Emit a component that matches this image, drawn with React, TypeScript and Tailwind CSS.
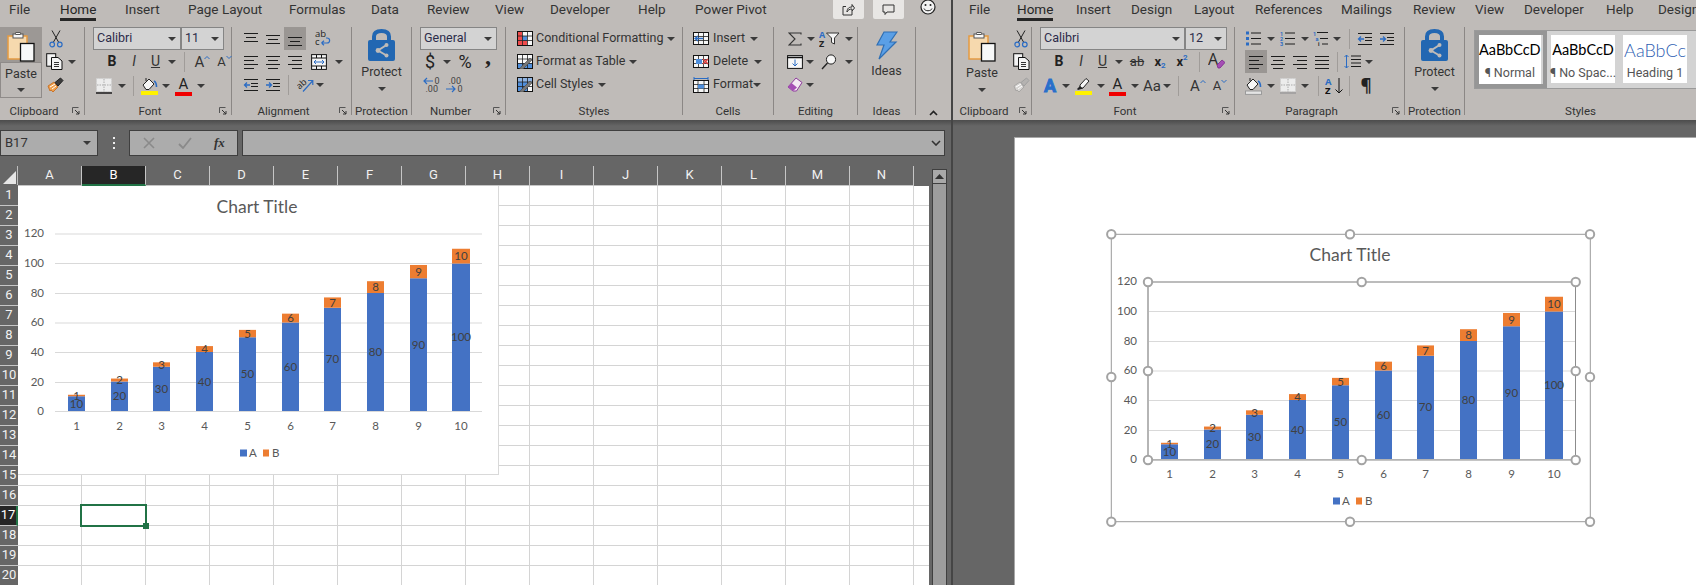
import type { ReactNode } from "react";

const INK = "#1c1c1c";
const BLUE = "#2b6cc4";

function Caret() {
  return (
    <svg width="8" height="4" viewBox="0 0 8 4" className="shrink-0">
      <polygon points="0,0 8,0 4,4" fill="#3a3a3a" />
    </svg>
  );
}

function Launcher() {
  return (
    <svg width="8" height="8" viewBox="0 0 8 8">
      <path d="M0.5 6V0.5H6.5" fill="none" stroke="#555" />
      <path d="M3 3L7 7M7 4V7H4" fill="none" stroke="#333" />
    </svg>
  );
}

function Lines({ rows, w = 16, h = 16 }: { rows: number[][]; w?: number; h?: number }) {
  return (
    <svg width={w} height={h} viewBox={`0 0 ${w} ${h}`}>
      {rows.map((r, i) => (
        <line key={i} x1={r[0]} x2={r[1]} y1={r[2] + 0.5} y2={r[2] + 0.5} stroke={INK} strokeWidth="1" />
      ))}
    </svg>
  );
}

function IndentIcon({ increase }: { increase?: boolean }) {
  return (
    <svg width="16" height="14" viewBox="0 0 16 14">
      <path d="M1 1.5H15M8 5.5H15M8 8.5H15M1 12.5H15" stroke={INK} fill="none" />
      {increase ? (
        <path d="M1 7H6M4 4.5L6.5 7L4 9.5" stroke={BLUE} fill="none" strokeWidth="1.3" />
      ) : (
        <path d="M7 7H1.5M4 4.5L1.5 7L4 9.5" stroke={BLUE} fill="none" strokeWidth="1.3" />
      )}
    </svg>
  );
}

function ClipboardIcon() {
  return (
    <svg width="28" height="30" viewBox="0 0 28 30">
      <rect x="1" y="4" width="19" height="23" fill="#f6d9ae" stroke="#e59a42" strokeWidth="1.5" />
      <rect x="6" y="2" width="10" height="4" fill="#f7f7f7" stroke="#555" />
      <rect x="9" y="0.5" width="4" height="2" fill="#f7f7f7" stroke="#555" />
      <rect x="13.5" y="11.5" width="13.5" height="17.5" fill="#f7f8f8" stroke="#111" strokeWidth="1.3" />
    </svg>
  );
}

function ScissorsIcon() {
  return (
    <svg width="14" height="18" viewBox="0 0 14 18">
      <path d="M3 0.5L9.5 12M11 0.5L4.5 12" stroke="#222" fill="none" />
      <circle cx="3.2" cy="14.5" r="2.3" stroke={BLUE} fill="none" strokeWidth="1.2" />
      <circle cx="10.8" cy="14.5" r="2.3" stroke={BLUE} fill="none" strokeWidth="1.2" />
    </svg>
  );
}

function CopyIcon() {
  return (
    <svg width="17" height="17" viewBox="0 0 17 17">
      <rect x="0.7" y="0.7" width="9" height="12.5" fill="#f4f4f4" stroke="#111" />
      <path d="M5.5 4.5H12L16 8V16.5H5.5Z" fill="#f4f4f4" stroke="#111" />
      <path d="M8 9.5H13M8 11.5H13M8 13.5H13" stroke="#333" />
    </svg>
  );
}

function BrushIcon({ muted }: { muted?: boolean }) {
  return (
    <svg width="17" height="16" viewBox="0 0 17 16">
      <path d="M1 9L7 5L11 10L6 15L4 13L3 14Z" fill={muted ? "#d6d4d2" : "#f0a04b"} stroke={muted ? "#a8a6a4" : "#c9752d"} />
      <path d="M3 10L8 7M5 12L9 9" stroke="#fff" />
      <path d="M8 5.5L13.5 1L16 3.5L11 9Z" fill={muted ? "#b5b3b1" : "#3b3b3b"} stroke={muted ? "#a0a0a0" : "#222"} />
    </svg>
  );
}

function BordersIcon({ muted }: { muted?: boolean }) {
  return (
    <svg width="16" height="16" viewBox="0 0 16 16">
      <rect x="0.5" y="0.5" width="15" height="13" fill="#ececec" stroke="#cfcfcf" strokeDasharray="1.5 1" />
      <path d="M8 1V14M1 7H15" stroke="#aaa" strokeDasharray="1.5 1" />
      <path d="M0 15H16" stroke={muted ? "#9a9a9a" : "#111"} strokeWidth="1.4" />
    </svg>
  );
}

function FillIcon({ bar = "#fff200", muted }: { bar?: string; muted?: boolean }) {
  return (
    <svg width="17" height="18" viewBox="0 0 17 18">
      <path d="M2 8L8 2L13 7L8 12.5H5Z" fill="#f6f6f6" stroke="#222" />
      <path d="M5 4V1" stroke="#222" />
      <path d="M13 4C15 5 15.5 8 15.5 10" stroke={BLUE} fill="none" strokeWidth="1.6" />
      {muted ? (
        <rect x="0.5" y="14" width="16" height="3.4" fill="#e4e4e4" stroke="#9a9a9a" />
      ) : (
        <rect x="0" y="14" width="17" height="4" fill={bar} />
      )}
    </svg>
  );
}

function HighlightIcon() {
  return (
    <svg width="17" height="18" viewBox="0 0 17 18">
      <path d="M5 8L11 1.5L14 4L8 11L5 11.5Z" fill="#f7f7f7" stroke="#222" />
      <path d="M5 9L8 11.5L3 13L2 12Z" fill="#222" />
      <rect x="0" y="14" width="17" height="4" fill="#fff200" />
    </svg>
  );
}

function FontColorIcon() {
  return (
    <div className="flex h-[20px] w-[17px] flex-col items-center">
      <span className="h-[15px] text-[15px] leading-[16px] text-[#222]">A</span>
      <span className="mt-[1px] h-[4px] w-[17px] bg-[#f00000]" />
    </div>
  );
}

function Grow({ down }: { down?: boolean }) {
  return (
    <div className="flex items-start">
      <span className={down ? "text-[13px] leading-[16px] text-[#333]" : "text-[15px] leading-[16px] text-[#333]"}>A</span>
      <svg width="6" height="5" viewBox="0 0 6 5" className="mt-[1px]">
        <path d={down ? "M0.5 1L3 3.5L5.5 1" : "M0.5 4L3 1.5L5.5 4"} stroke={BLUE} fill="none" />
      </svg>
    </div>
  );
}

function WrapIcon() {
  return (
    <svg width="16" height="17" viewBox="0 0 16 17">
      <text x="0" y="7" fontSize="9.5" fill="#222" fontFamily="Open Sans, sans-serif">ab</text>
      <text x="0" y="15" fontSize="9.5" fill="#222" fontFamily="Open Sans, sans-serif">c</text>
      <path d="M6.5 13H12C15.5 13 15.5 8 12 8H11M6.5 13L9 10.8M6.5 13L9 15.2" stroke={BLUE} fill="none" strokeWidth="1.2" />
    </svg>
  );
}

function MergeIcon() {
  return (
    <svg width="16" height="16" viewBox="0 0 16 16">
      <rect x="0.6" y="0.6" width="14.8" height="14.8" fill="#f5f5f5" stroke="#111" />
      <path d="M5.5 1V4M10.5 1V4M5.5 12V15M10.5 12V15M1 4H15M1 12H15" stroke="#111" />
      <path d="M3 8H13M5 6L3 8L5 10M11 6L13 8L11 10" stroke={BLUE} fill="none" />
    </svg>
  );
}

function OrientationIcon() {
  return (
    <svg width="17" height="16" viewBox="0 0 17 16">
      <text x="0" y="10" fontSize="9" fill="#222" fontFamily="Open Sans, sans-serif" transform="rotate(-42 5 8)">ab</text>
      <path d="M6 14.5L15.5 4M11 3.5H15.8V8" stroke={BLUE} fill="none" strokeWidth="1.2" />
    </svg>
  );
}

function ProtectIcon() {
  return (
    <svg width="27" height="32" viewBox="0 0 27 32">
      <path d="M6 13V7.5C6 3.5 9 2 13.5 2C18 2 21 3.5 21 7.5V13" fill="none" stroke="#2267b2" strokeWidth="4" />
      <rect x="0" y="11" width="27" height="21" rx="2" fill="#2267b2" />
      <path d="M18.5 16L10 21.5L18.5 26.5" fill="none" stroke="#bfbbb8" strokeWidth="2" />
      <circle cx="18.5" cy="16" r="2" fill="#bfbbb8" />
      <circle cx="10" cy="21.5" r="2.4" fill="#bfbbb8" />
      <circle cx="18.5" cy="26.5" r="2" fill="#bfbbb8" />
    </svg>
  );
}

function DecimalIcon({ more }: { more?: boolean }) {
  return (
    <div className="flex flex-col text-[9px] leading-[8px] text-[#444]">
      {more ? (
        <>
          <div className="flex items-center gap-[1px]">
            <svg width="10" height="8" viewBox="0 0 10 8">
              <path d="M10 4H1M4 1L1 4L4 7" stroke={BLUE} fill="none" strokeWidth="1.2" />
            </svg>
            <span>0</span>
          </div>
          <span className="pl-[2px]">.00</span>
        </>
      ) : (
        <>
          <span className="pl-[2px]">.00</span>
          <div className="flex items-center gap-[1px]">
            <svg width="10" height="8" viewBox="0 0 10 8">
              <path d="M0 4H9M6 1L9 4L6 7" stroke={BLUE} fill="none" strokeWidth="1.2" />
            </svg>
            <span>0</span>
          </div>
        </>
      )}
    </div>
  );
}

function TableIcon({ kind }: { kind: "cond" | "format" | "styles" }) {
  return (
    <svg width="16" height="15" viewBox="0 0 16 15">
      <rect x="0.5" y="0.5" width="15" height="14" fill="#f8f8f8" stroke="#111" />
      {kind === "cond" && (
        <>
          <rect x="1" y="1" width="4" height="13" fill="#ef4b4b" />
          <rect x="5" y="10" width="5" height="4" fill="#ef4b4b" />
          <rect x="5" y="5" width="5" height="5" fill="#4f8fdc" />
        </>
      )}
      {kind === "styles" && <rect x="1" y="1" width="14" height="4" fill="#8fb4e3" />}
      {kind === "styles" && <rect x="1" y="5" width="10" height="9" fill="#4f8fdc" />}
      {kind === "format" && <rect x="1" y="9" width="14" height="5" fill="#4f8fdc" />}
      <path d="M5.5 1V14M10.5 1V14M1 5H15M1 9.5H15" stroke="#222" strokeWidth="0.8" />
      {kind !== "cond" && <path d="M4 13L13 4L15 6L6 15L2.5 15Z" fill="#777" stroke="#444" strokeWidth="0.6" />}
    </svg>
  );
}

function CellsIcon({ kind }: { kind: "insert" | "delete" | "format" }) {
  return (
    <svg width="16" height="16" viewBox="0 0 16 16">
      {kind === "format" && <path d="M1 1.5H15M1 0V3M15 0V3" stroke={BLUE} />}
      <rect x="0.5" y={kind === "format" ? 3.5 : 1.5} width="15" height={kind === "format" ? 12 : 12} fill="#f6f6f6" stroke="#111" />
      <path d={kind === "format" ? "M5 4V15M11 4V15M1 7.5H15M1 11.5H15" : "M5.5 2V13M10.5 2V13M1 5.5H15M1 9.5H15"} stroke="#222" strokeWidth="0.8" />
      {kind === "format" && <rect x="5" y="7.5" width="6" height="4" fill="#4f8fdc" />}
      {kind === "insert" && <path d="M10 7.5H2M5 5L2 7.5L5 10" stroke={BLUE} fill="none" strokeWidth="1.3" />}
      {kind === "delete" && (
        <>
          <rect x="3" y="5" width="6" height="5" fill="#4f8fdc" />
          <path d="M10 5L15 10M15 5L10 10" stroke="#e04040" strokeWidth="1.5" />
        </>
      )}
    </svg>
  );
}

function SigmaIcon() {
  return (
    <svg width="14" height="14" viewBox="0 0 14 14">
      <path d="M13 2.5V1H1L7 7L1 13H13V11.5" fill="none" stroke="#333" strokeWidth="1.1" />
    </svg>
  );
}

function SortFilterIcon() {
  return (
    <svg width="22" height="17" viewBox="0 0 22 17">
      <text x="0" y="7.5" fontSize="9" fontWeight="700" fill={BLUE} fontFamily="Open Sans, sans-serif">A</text>
      <text x="0" y="16.5" fontSize="9" fontWeight="700" fill="#222" fontFamily="Open Sans, sans-serif">Z</text>
      <path d="M7.5 3H20L15.5 8V14L12.5 12.5V8Z" fill="#f5f5f5" stroke="#333" />
    </svg>
  );
}

function FillDownIcon() {
  return (
    <svg width="16" height="14" viewBox="0 0 16 14">
      <rect x="0.6" y="0.6" width="14.8" height="12.8" fill="#f7f7f7" stroke="#111" />
      <path d="M0 2.5H16" stroke="#111" strokeWidth="1.5" />
      <path d="M8 4.5V11M5.5 8.5L8 11L10.5 8.5" stroke={BLUE} fill="none" />
    </svg>
  );
}

function FindIcon() {
  return (
    <svg width="16" height="16" viewBox="0 0 16 16">
      <circle cx="10" cy="5.5" r="4.6" fill="#f6f6f6" stroke="#222" />
      <path d="M6.5 9L1 15" stroke="#222" strokeWidth="1.4" />
    </svg>
  );
}

function EraserIcon() {
  return (
    <svg width="16" height="16" viewBox="0 0 16 16">
      <path d="M6 14L1 10L9 1L15 5.5L9.5 14Z" fill="#f4e7f4" stroke="#8e3a9d" />
      <path d="M6 14L1 10L4.5 6L10 10.5Z" fill="#a54db5" />
    </svg>
  );
}

function BoltIcon() {
  return (
    <svg width="22" height="29" viewBox="0 0 22 29">
      <path d="M8 1H21L14 11H20L3 28L8 14H1Z" fill="#5a9fe6" stroke="#2f6fb4" strokeWidth="1.2" />
    </svg>
  );
}

function BulletIcon({ kind }: { kind: "bullet" | "number" | "multi" }) {
  return (
    <svg width="16" height="15" viewBox="0 0 16 15">
      {kind === "bullet" && (
        <>
          <rect x="0" y="0.5" width="3" height="3" fill={BLUE} />
          <rect x="0" y="6" width="3" height="3" fill={BLUE} />
          <rect x="0" y="11.5" width="3" height="3" fill={BLUE} />
        </>
      )}
      {kind === "number" && (
        <>
          <text x="0" y="4.5" fontSize="5.5" fontWeight="700" fill={BLUE}>1</text>
          <text x="0" y="9.5" fontSize="5.5" fontWeight="700" fill={BLUE}>2</text>
          <text x="0" y="14.5" fontSize="5.5" fontWeight="700" fill={BLUE}>3</text>
        </>
      )}
      {kind === "multi" && (
        <>
          <text x="0" y="4.5" fontSize="5.5" fontWeight="700" fill={BLUE}>1</text>
          <text x="2.5" y="9.5" fontSize="5.5" fontWeight="700" fill={BLUE}>a</text>
          <text x="5" y="14.5" fontSize="5.5" fontWeight="700" fill={INK}>i</text>
        </>
      )}
      <path d={kind === "multi" ? "M4 1.5H15M7 7.5H15M9 13H15" : "M5 2H15M5 7.5H15M5 13H15"} stroke={INK} />
    </svg>
  );
}

function LineSpacingIcon() {
  return (
    <svg width="18" height="15" viewBox="0 0 18 15">
      <path d="M2.5 1V14M0.5 3L2.5 1L4.5 3M0.5 12L2.5 14L4.5 12" stroke={BLUE} fill="none" />
      <path d="M7 2H17M7 5.5H17M7 9H17M7 12.5H17" stroke={INK} />
    </svg>
  );
}

function SortIcon() {
  return (
    <svg width="19" height="17" viewBox="0 0 19 17">
      <text x="0" y="8" fontSize="9.5" fontWeight="700" fill={BLUE} fontFamily="Open Sans, sans-serif">A</text>
      <text x="0" y="16.5" fontSize="9.5" fontWeight="700" fill="#111" fontFamily="Open Sans, sans-serif">Z</text>
      <path d="M14 1V16M10.5 12.5L14 16L17.5 12.5" stroke="#111" fill="none" />
    </svg>
  );
}

function ClearFormatIcon() {
  return (
    <svg width="17" height="17" viewBox="0 0 17 17">
      <text x="0" y="12" fontSize="16" fill="#2a2a2a" fontFamily="Open Sans, sans-serif">A</text>
      <path d="M9 12L14 7L17 9.5L12 15L10 15Z" fill="#a54db5" stroke="#7b2a8c" strokeWidth="0.8" />
    </svg>
  );
}

function TextEffectIcon() {
  return (
    <span className="text-[18px] leading-[20px] font-bold text-[#2a6fc9] [-webkit-text-stroke:1px_#2a6fc9] [text-shadow:0_0_1px_#fff]">A</span>
  );
}

function Cell({ w, children, hl }: { w: string; children?: ReactNode; hl?: boolean }) {
  return (
    <div className={`flex h-[23px] shrink-0 items-center justify-center ${w} ${hl ? "bg-[#9a9693]" : ""}`}>{children}</div>
  );
}

function Sep({ gap }: { gap: string }) {
  return <div className={`h-[20px] w-px shrink-0 bg-[#a09c99] ${gap}`} />;
}

function Row({ children, className = "" }: { children: ReactNode; className?: string }) {
  return <div className={`flex h-[23px] items-center ${className}`}>{children}</div>;
}

function Group({
  w,
  label,
  launcher,
  children,
  border = true,
}: {
  w: string;
  label: string;
  launcher?: boolean;
  children: ReactNode;
  border?: boolean;
}) {
  return (
    <div className={`flex h-[88px] shrink-0 flex-col ${w} ${border ? "border-r border-[#8b8785]" : ""}`}>
      <div className="h-[80px]">{children}</div>
      <div className="flex h-[8px] items-center">
        <span className="flex-1 text-center text-[11.5px] leading-[8px] whitespace-nowrap text-[#333]">{label}</span>
        {launcher && (
          <span className="flex w-[16px] justify-center">
            <Launcher />
          </span>
        )}
      </div>
    </div>
  );
}

function Tabs({ tabs, pl, children }: { tabs: { label: string; w: string; active?: boolean }[]; pl: string; children?: ReactNode }) {
  return (
    <div className={`flex h-[27px] items-start ${pl}`}>
      {tabs.map((t) => (
        <div key={t.label} className={`flex shrink-0 ${t.w}`}>
          <span
            className={
              t.active
                ? "block h-[21px] border-b-[3px] border-[#262626] text-[13.5px] leading-[18px] whitespace-nowrap text-[#262626]"
                : "block h-[21px] text-[13.5px] leading-[18px] whitespace-nowrap text-[#333]"
            }
          >
            {t.label}
          </span>
        </div>
      ))}
      {children}
    </div>
  );
}

function Combo({ text, w }: { text: string; w: string }) {
  return (
    <div className={`flex h-[23px] shrink-0 items-center justify-between border border-[#858585] bg-[#d3d3d3] pr-[4px] pl-[3px] ${w}`}>
      <span className="text-[12.5px] whitespace-nowrap text-[#2c2c4a]">{text}</span>
      <Caret />
    </div>
  );
}

function PasteButton({ selected }: { selected: boolean }) {
  if (selected) {
    return (
      <div className="flex w-[42px] shrink-0 flex-col">
        <div className="flex h-[35px] justify-center bg-[#9c9895] pt-[5px]">
          <ClipboardIcon />
        </div>
        <div className="flex h-[36px] flex-col items-center gap-[6px] border border-[#8f8b89] bg-[#bdb9b6] pt-[3px]">
          <span className="text-[12.5px] leading-[16px] text-[#333]">Paste</span>
          <Caret />
        </div>
      </div>
    );
  }
  return (
    <div className="flex w-[58px] shrink-0 flex-col items-center">
      <div className="h-[35px] pt-[5px]">
        <ClipboardIcon />
      </div>
      <span className="mt-[3px] text-[12.5px] leading-[16px] text-[#333]">Paste</span>
      <span className="mt-[7px]">
        <Caret />
      </span>
    </div>
  );
}

function ProtectGroup({ w }: { w: string }) {
  return (
    <Group w={w} label="Protection">
      <div className="flex flex-col items-center pt-[2px]">
        <ProtectIcon />
        <span className="mt-[3px] text-[12.5px] leading-[16px] text-[#333]">Protect</span>
        <span className="mt-[7px]">
          <Caret />
        </span>
      </div>
    </Group>
  );
}

function ExcelRibbon() {
  const tabs = [
    { label: "File", w: "w-[51px]" },
    { label: "Home", w: "w-[65px]", active: true },
    { label: "Insert", w: "w-[63px]" },
    { label: "Page Layout", w: "w-[101px]" },
    { label: "Formulas", w: "w-[82px]" },
    { label: "Data", w: "w-[56px]" },
    { label: "Review", w: "w-[68px]" },
    { label: "View", w: "w-[55px]" },
    { label: "Developer", w: "w-[88px]" },
    { label: "Help", w: "w-[57px]" },
    { label: "Power Pivot", w: "w-[100px]" },
  ];
  return (
    <div className="h-[120px] bg-[#bfbbb8]">
      <Tabs tabs={tabs} pl="pl-[9px]">
        <div className="ml-auto flex items-start pr-[15px]">
          <div className="flex h-[19px] w-[31px] items-center justify-center rounded-b-[2px] bg-[#e8e6e4]">
            <svg width="13" height="13" viewBox="0 0 13 13">
              <path d="M4 3.5H1V12H10V8M5 9C5 5 7.5 4 10 4V1.5L12.5 5L10 8V6C7.5 6 6 7 5 9Z" fill="none" stroke="#333" />
            </svg>
          </div>
          <div className="ml-[9px] flex h-[19px] w-[31px] items-center justify-center rounded-b-[2px] bg-[#e8e6e4]">
            <svg width="13" height="12" viewBox="0 0 13 12">
              <path d="M1 1H12V8H5L3 10.5V8H1Z" fill="none" stroke="#333" />
            </svg>
          </div>
          <svg width="16" height="17" viewBox="0 0 16 17" className="mt-[-1px] ml-[16px]">
            <circle cx="8" cy="8" r="7" fill="#f2f2f2" stroke="#222" strokeWidth="1.2" />
            <circle cx="5.5" cy="6" r="1" fill="#222" />
            <circle cx="10.5" cy="6" r="1" fill="#222" />
            <path d="M4 9.5C5 12.5 11 12.5 12 9.5" stroke="#222" fill="none" />
          </svg>
        </div>
      </Tabs>
      <div className="flex">
        <Group w="w-[85px]" label="Clipboard" launcher>
          <div className="flex">
            <PasteButton selected />
            <div className="ml-[4px] flex flex-col">
              <Row className="pl-[3px]"><ScissorsIcon /></Row>
              <Row>
                <CopyIcon />
                <span className="ml-[5px]"><Caret /></span>
              </Row>
              <Row className="pl-[1px]"><BrushIcon /></Row>
            </div>
          </div>
        </Group>
        <Group w="w-[147px]" label="Font" launcher>
          <div className="pl-[8px]">
            <Row>
              <Combo text="Calibri" w="w-[88px]" />
              <Combo text="11" w="w-[43px]" />
            </Row>
            <Row className="pl-[8px]">
              <Cell w="w-[22px]"><span className="text-[14px] font-bold text-[#222]">B</span></Cell>
              <Cell w="w-[22px]"><span className="text-[14px] text-[#333] italic">I</span></Cell>
              <Cell w="w-[21px]"><span className="text-[14px] text-[#333] underline">U</span></Cell>
              <Cell w="w-[12px]"><Caret /></Cell>
              <Sep gap="mx-[6px]" />
              <Cell w="w-[23px]"><Grow /></Cell>
              <Cell w="w-[21px]"><Grow down /></Cell>
            </Row>
            <Row className="pt-[2px]">
              <Cell w="w-[21px]"><BordersIcon /></Cell>
              <Cell w="w-[15px]"><Caret /></Cell>
              <Sep gap="mx-[4px]" />
              <Cell w="w-[22px]"><FillIcon /></Cell>
              <Cell w="w-[11px]"><Caret /></Cell>
              <Cell w="w-[25px]"><FontColorIcon /></Cell>
              <Cell w="w-[9px]"><Caret /></Cell>
            </Row>
          </div>
        </Group>
        <Group w="w-[120px]" label="Alignment" launcher>
          <div className="pl-[8px]">
            <Row>
              <Cell w="w-[22px]"><Lines rows={[[1, 15, 2], [3, 13, 6], [1, 15, 10]]} /></Cell>
              <Cell w="w-[22px]"><Lines rows={[[1, 15, 4], [3, 13, 8], [1, 15, 12]]} /></Cell>
              <Cell w="w-[22px]" hl><Lines rows={[[1, 15, 6], [3, 13, 10], [1, 15, 14]]} /></Cell>
              <Cell w="w-[28px]"><span className="pl-[6px]"><WrapIcon /></span></Cell>
            </Row>
            <Row>
              <Cell w="w-[22px]"><Lines rows={[[1, 15, 2], [1, 11, 6], [1, 15, 10], [1, 11, 14]]} /></Cell>
              <Cell w="w-[22px]"><Lines rows={[[1, 15, 2], [3, 13, 6], [1, 15, 10], [3, 13, 14]]} /></Cell>
              <Cell w="w-[22px]"><Lines rows={[[1, 15, 2], [5, 15, 6], [1, 15, 10], [5, 15, 14]]} /></Cell>
              <Cell w="w-[26px]"><MergeIcon /></Cell>
              <Cell w="w-[14px]"><Caret /></Cell>
            </Row>
            <Row>
              <Cell w="w-[22px]"><IndentIcon /></Cell>
              <Cell w="w-[22px]"><IndentIcon increase /></Cell>
              <Sep gap="mx-[4px]" />
              <Cell w="w-[24px]"><OrientationIcon /></Cell>
              <Cell w="w-[6px]"><Caret /></Cell>
            </Row>
          </div>
        </Group>
        <ProtectGroup w="w-[60px]" />
        <Group w="w-[94px]" label="Number" launcher>
          <div className="pl-[8px]">
            <Combo text="General" w="w-[77px]" />
            <Row>
              <Cell w="w-[20px]"><span className="text-[18px] text-[#222]">$</span></Cell>
              <Cell w="w-[14px]"><Caret /></Cell>
              <Cell w="w-[22px]"><span className="text-[18px] text-[#222]">%</span></Cell>
              <Cell w="w-[24px]"><span className="mt-[-12px] font-['Liberation_Serif',serif] text-[24px] leading-[16px] font-bold text-[#222]">,</span></Cell>
            </Row>
            <Row>
              <Cell w="w-[23px]"><DecimalIcon more /></Cell>
              <Cell w="w-[23px]"><DecimalIcon /></Cell>
            </Row>
          </div>
        </Group>
        <Group w="w-[177px]" label="Styles">
          <div className="pl-[11px]">
            <Row><TableIcon kind="cond" /><span className="ml-[3px] text-[12.5px] whitespace-nowrap text-[#333]">Conditional Formatting</span><span className="ml-[4px]"><Caret /></span></Row>
            <Row><TableIcon kind="format" /><span className="ml-[3px] text-[12.5px] whitespace-nowrap text-[#333]">Format as Table</span><span className="ml-[4px]"><Caret /></span></Row>
            <Row><TableIcon kind="styles" /><span className="ml-[3px] text-[12.5px] whitespace-nowrap text-[#333]">Cell Styles</span><span className="ml-[4px]"><Caret /></span></Row>
          </div>
        </Group>
        <Group w="w-[91px]" label="Cells">
          <div className="pl-[10px]">
            <Row><CellsIcon kind="insert" /><span className="ml-[4px] w-[37px] text-[12.5px] text-[#333]">Insert</span><Caret /></Row>
            <Row><CellsIcon kind="delete" /><span className="ml-[4px] w-[41px] text-[12.5px] text-[#333]">Delete</span><Caret /></Row>
            <Row><CellsIcon kind="format" /><span className="ml-[4px] w-[40px] text-[12.5px] text-[#333]">Format</span><Caret /></Row>
          </div>
        </Group>
        <Group w="w-[84px]" label="Editing">
          <div className="pl-[12px]">
            <Row>
              <Cell w="w-[17px]"><SigmaIcon /></Cell>
              <Cell w="w-[15px]"><Caret /></Cell>
              <Cell w="w-[24px]"><SortFilterIcon /></Cell>
              <Cell w="w-[14px]"><Caret /></Cell>
            </Row>
            <Row>
              <Cell w="w-[17px]"><FillDownIcon /></Cell>
              <Cell w="w-[13px]"><Caret /></Cell>
              <Cell w="w-[26px]"><FindIcon /></Cell>
              <Cell w="w-[14px]"><Caret /></Cell>
            </Row>
            <Row>
              <Cell w="w-[17px]"><EraserIcon /></Cell>
              <Cell w="w-[13px]"><Caret /></Cell>
            </Row>
          </div>
        </Group>
        <Group w="w-[58px]" label="Ideas">
          <div className="flex flex-col items-center pt-[4px]">
            <BoltIcon />
            <span className="mt-[3px] text-[12.5px] leading-[16px] text-[#333]">Ideas</span>
          </div>
        </Group>
        <div className="flex h-[88px] flex-1 items-end justify-center">
          <svg width="9" height="6" viewBox="0 0 9 6" className="mb-[-1px]">
            <path d="M1 5L4.5 1.5L8 5" stroke="#222" fill="none" strokeWidth="1.6" />
          </svg>
        </div>
      </div>
    </div>
  );
}

function WordRibbon() {
  const tabs = [
    { label: "File", w: "w-[48px]" },
    { label: "Home", w: "w-[59px]", active: true },
    { label: "Insert", w: "w-[55px]" },
    { label: "Design", w: "w-[63px]" },
    { label: "Layout", w: "w-[61px]" },
    { label: "References", w: "w-[86px]" },
    { label: "Mailings", w: "w-[72px]" },
    { label: "Review", w: "w-[62px]" },
    { label: "View", w: "w-[49px]" },
    { label: "Developer", w: "w-[82px]" },
    { label: "Help", w: "w-[52px]" },
    { label: "Design ", w: "w-[38px]" },
  ];
  return (
    <div className="h-[120px] overflow-hidden bg-[#bfbbb8]">
      <Tabs tabs={tabs} pl="pl-[16px]" />
      <div className="flex">
        <Group w="w-[79px]" label="Clipboard" launcher>
          <div className="flex pl-[0px]">
            <PasteButton selected={false} />
            <div className="flex w-[20px] flex-col items-center">
              <Row><ScissorsIcon /></Row>
              <Row><CopyIcon /></Row>
              <Row><BrushIcon muted /></Row>
            </div>
          </div>
        </Group>
        <Group w="w-[203px]" label="Font" launcher>
          <div className="pl-[8px]">
            <Row>
              <Combo text="Calibri" w="w-[145px]" />
              <Combo text="12" w="w-[42px]" />
            </Row>
            <Row className="pl-[8px]">
              <Cell w="w-[22px]"><span className="text-[14px] font-bold text-[#222]">B</span></Cell>
              <Cell w="w-[22px]"><span className="text-[14px] text-[#333] italic">I</span></Cell>
              <Cell w="w-[21px]"><span className="text-[14px] text-[#333] underline">U</span></Cell>
              <Cell w="w-[12px]"><Caret /></Cell>
              <Cell w="w-[24px]"><span className="text-[13px] text-[#333] line-through">ab</span></Cell>
              <Cell w="w-[22px]">
                <span className="text-[13px] font-bold text-[#222]">x</span>
                <span className="mt-[8px] text-[8px] leading-[8px] font-bold text-[#2b6cc4]">2</span>
              </Cell>
              <Cell w="w-[22px]">
                <span className="text-[13px] font-bold text-[#222]">x</span>
                <span className="mb-[8px] text-[8px] leading-[8px] font-bold text-[#2b6cc4]">2</span>
              </Cell>
              <Sep gap="mx-[6px]" />
              <Cell w="w-[20px]"><ClearFormatIcon /></Cell>
            </Row>
            <Row className="pt-[2px]">
              <Cell w="w-[20px]"><TextEffectIcon /></Cell>
              <Cell w="w-[11px]"><Caret /></Cell>
              <Cell w="w-[24px]"><HighlightIcon /></Cell>
              <Cell w="w-[11px]"><Caret /></Cell>
              <Cell w="w-[23px]"><FontColorIcon /></Cell>
              <Cell w="w-[11px]"><Caret /></Cell>
              <Cell w="w-[24px]"><span className="text-[15px] leading-[18px] text-[#333]">Aa</span></Cell>
              <Cell w="w-[6px]"><Caret /></Cell>
              <Sep gap="mx-[8px]" />
              <Cell w="w-[22px]"><Grow /></Cell>
              <Cell w="w-[22px]"><Grow down /></Cell>
            </Row>
          </div>
        </Group>
        <Group w="w-[170px]" label="Paragraph" launcher>
          <div className="pl-[10px]">
            <Row>
              <Cell w="w-[17px]"><BulletIcon kind="bullet" /></Cell>
              <Cell w="w-[17px]"><Caret /></Cell>
              <Cell w="w-[17px]"><BulletIcon kind="number" /></Cell>
              <Cell w="w-[17px]"><Caret /></Cell>
              <Cell w="w-[16px]"><BulletIcon kind="multi" /></Cell>
              <Cell w="w-[16px]"><Caret /></Cell>
              <Sep gap="mx-[4px]" />
              <Cell w="w-[22px]"><IndentIcon /></Cell>
              <Cell w="w-[22px]"><IndentIcon increase /></Cell>
            </Row>
            <Row>
              <Cell w="w-[22px]" hl><Lines rows={[[1, 15, 2], [1, 11, 6], [1, 15, 10], [1, 11, 14]]} /></Cell>
              <Cell w="w-[22px]"><Lines rows={[[1, 15, 2], [3, 13, 6], [1, 15, 10], [3, 13, 14]]} /></Cell>
              <Cell w="w-[22px]"><Lines rows={[[1, 15, 2], [5, 15, 6], [1, 15, 10], [5, 15, 14]]} /></Cell>
              <Cell w="w-[22px]"><Lines rows={[[1, 15, 2], [1, 15, 6], [1, 15, 10], [1, 15, 14]]} /></Cell>
              <Sep gap="mx-[4px]" />
              <Cell w="w-[22px]"><LineSpacingIcon /></Cell>
              <Cell w="w-[10px]"><Caret /></Cell>
            </Row>
            <Row className="pt-[2px]">
              <Cell w="w-[17px]"><FillIcon muted /></Cell>
              <Cell w="w-[17px]"><Caret /></Cell>
              <Cell w="w-[17px]"><BordersIcon muted /></Cell>
              <Cell w="w-[17px]"><Caret /></Cell>
              <Sep gap="mx-[5px]" />
              <Cell w="w-[20px]"><SortIcon /></Cell>
              <Sep gap="mx-[5px]" />
              <Cell w="w-[22px]"><span className="font-['Open_Sans',sans-serif] text-[17px] font-bold text-[#222]">¶</span></Cell>
            </Row>
          </div>
        </Group>
        <ProtectGroup w="w-[60px]" />
        <Group w="w-[231px]" label="Styles" border={false}>
          <div className="mt-[3px] ml-[9px] flex h-[59px] w-[225px] items-start border border-[#9a9a9a] bg-[#d3d3d3] pt-[4px] pb-[4px]">
            <div className="-mt-[4px] flex h-[57px] w-[72px] shrink-0 justify-start border-[4px] border-[#969696] pr-[4px]">
              <div className="flex h-[49px] w-[64px] flex-col items-center bg-white">
                <span className="font-['Lato',sans-serif] text-[14.5px] leading-[30px] whitespace-nowrap text-black">AaBbCcD</span>
                <span className="text-[12.5px] leading-[16px] whitespace-nowrap text-[#555]">¶ Normal</span>
              </div>
            </div>
            <div className="ml-[4px] flex h-[48px] w-[64px] shrink-0 flex-col items-center bg-white">
              <span className="font-['Lato',sans-serif] text-[14.5px] leading-[30px] whitespace-nowrap text-black">AaBbCcD</span>
              <span className="text-[12.5px] leading-[16px] whitespace-nowrap text-[#555]">¶ No Spac...</span>
            </div>
            <div className="ml-[8px] flex h-[48px] w-[64px] shrink-0 flex-col items-center overflow-hidden bg-white">
              <span className="h-[30px] font-['Lato',sans-serif] text-[18px] leading-[30px] font-light whitespace-nowrap text-[#2f5fb3]">AaBbCc</span>
              <span className="text-[12.5px] leading-[16px] whitespace-nowrap text-[#555]">Heading 1</span>
            </div>
          </div>
        </Group>
      </div>
    </div>
  );
}

const BARS = [
  { a: 10, b: 1, x: 50 },
  { a: 20, b: 2, x: 93 },
  { a: 30, b: 3, x: 135 },
  { a: 40, b: 4, x: 178 },
  { a: 50, b: 5, x: 221 },
  { a: 60, b: 6, x: 264 },
  { a: 70, b: 7, x: 306 },
  { a: 80, b: 8, x: 349 },
  { a: 90, b: 9, x: 392 },
  { a: 100, b: 10, x: 434 },
];
const TICKS = [
  { v: 120, y: 48 },
  { v: 100, y: 77.5 },
  { v: 80, y: 107.5 },
  { v: 60, y: 137 },
  { v: 40, y: 166.5 },
  { v: 20, y: 196.5 },
  { v: 0, y: 225.5 },
];
const UNIT = 1.475;
const BASE = 225;

function Handle({ x, y }: { x: number; y: number }) {
  return <circle cx={x} cy={y} r="4.2" fill="#fff" stroke="#a3a3a3" strokeWidth="2" />;
}

function BarChart({ selected }: { selected?: boolean }) {
  return (
    <svg width="480" height="288" viewBox="0 0 480 288" className="block overflow-visible bg-white" fontFamily="Lato, Carlito, sans-serif">
      <text x="239" y="27" textAnchor="middle" fontSize="17.5" fill="#595959">Chart Title</text>
      {TICKS.map((t) => (
        <g key={t.v}>
          <line x1="37" x2="464" y1={t.y} y2={t.y} stroke="#d9d9d9" />
          <text x="26" y={t.y + 3} textAnchor="end" fontSize="11.5" fill="#595959">{t.v}</text>
        </g>
      ))}
      {BARS.map((d) => {
        const w = d.a === 100 ? 18 : 17;
        const cx = d.x + w / 2;
        const hA = d.a * UNIT;
        const hB = d.b * UNIT;
        return (
          <g key={d.a}>
            <rect x={d.x} y={BASE - hA} width={w} height={hA} fill="#4472c4" />
            <rect x={d.x} y={BASE - hA - hB} width={w} height={hB} fill="#ed7d31" />
            <text x={cx} y={BASE - hA / 2 + 4} textAnchor="middle" fontSize="11.5" fill="#404040">{d.a}</text>
            <text x={cx} y={BASE - hA - hB / 2 + 4} textAnchor="middle" fontSize="11.5" fill="#404040">{d.b}</text>
            <text x={cx} y="244" textAnchor="middle" fontSize="11.5" fill="#595959">{d.a / 10}</text>
          </g>
        );
      })}
      <rect x="222" y="263.5" width="7" height="7" fill="#4472c4" />
      <text x="231" y="271" fontSize="11.5" fill="#595959">A</text>
      <rect x="245" y="263.5" width="6" height="7" fill="#ed7d31" />
      <text x="254" y="271" fontSize="11.5" fill="#595959">B</text>
      {selected && (
        <g>
          <rect x="0.3" y="0.3" width="479" height="287.4" fill="none" stroke="#9a9a9a" strokeWidth="1" />
          <rect x="37" y="48" width="427.5" height="178" fill="none" stroke="#8c8c8c" strokeWidth="1" />
          <line x1="37" x2="37" y1="48" y2="226" stroke="#b5b5b5" strokeWidth="2" />
          {[
            [0.3, 0.3], [239, 0.3], [479, 0.3], [0.3, 143], [479, 143], [0.3, 287.7], [239, 287.7], [479, 287.7],
            [37, 48], [250.7, 48], [464.7, 48], [37, 137], [464.7, 137], [37, 226], [250.7, 226], [464.7, 226],
          ].map((p) => (
            <Handle key={`${p[0]}-${p[1]}`} x={p[0]} y={p[1]} />
          ))}
        </g>
      )}
    </svg>
  );
}

const COLS = ["A", "B", "C", "D", "E", "F", "G", "H", "I", "J", "K", "L", "M", "N"];
const ROWS = Array.from({ length: 20 }, (_, i) => i + 1);

function Sheet() {
  return (
    <div className="flex h-[420px]">
      <div className="w-[928.5px] shrink-0">
        <div className="flex h-[20px]">
          <div className="flex h-[19px] w-[18px] shrink-0 items-end justify-end border-r border-[#bdbdbd] pr-[1px] pb-[1px]">
            <svg width="13" height="13" viewBox="0 0 13 13">
              <polygon points="13,0 13,13 0,13" fill="#e6e6e6" />
            </svg>
          </div>
          {COLS.map((c) => (
            <div
              key={c}
              className={
                c === "B"
                  ? "flex h-[20px] w-[64px] shrink-0 items-center justify-center border-r border-b-2 border-[#c6c6c6] border-b-[#217346] bg-[#262626] text-[13px] text-white"
                  : "flex h-[20px] w-[64px] shrink-0 items-center justify-center border-r border-b border-[#c6c6c6] text-[13px] text-[#f2f2f2]"
              }
            >
              {c}
            </div>
          ))}
        </div>
        <div className="relative">
          {ROWS.map((r) => (
            <div key={r} className="flex h-[20px]">
              <div
                className={
                  r === 17
                    ? "flex h-[20px] w-[18px] shrink-0 items-center justify-center border-r-2 border-b border-[#217346] border-b-[#c6c6c6] bg-[#262626] text-[13px] text-white"
                    : "flex h-[20px] w-[18px] shrink-0 items-center justify-center border-b border-[#c6c6c6] text-[13px] text-[#f2f2f2]"
                }
              >
                {r}
              </div>
              {COLS.map((c) => (
                <div key={c} className="h-[20px] w-[64px] shrink-0 border-r border-b border-[#d4d4d4] bg-white" />
              ))}
              <div className="h-[20px] flex-1 border-b border-[#d4d4d4] bg-white" />
            </div>
          ))}
          <div className="absolute top-0 left-[18px] border-r border-b border-[#d9d9d9]">
            <BarChart />
          </div>
          <div className="absolute top-[318px] left-[80px] h-[23px] w-[67px] border-2 border-[#217346]">
            <div className="absolute right-[-4px] bottom-[-4px] h-[6px] w-[6px] bg-[#217346]" />
          </div>
        </div>
      </div>
      <div className="mt-[3px] ml-[3.5px] flex w-[15px] flex-col border-x border-[#3f3f3f] bg-[#9d9d9d]">
        <div className="flex h-[15px] items-center justify-center border-y border-[#3f3f3f] bg-[#a8a8a8]">
          <svg width="9" height="5" viewBox="0 0 9 5">
            <polygon points="0,5 9,5 4.5,0" fill="#333" />
          </svg>
        </div>
      </div>
    </div>
  );
}

function ExcelPane() {
  return (
    <div className="flex w-[951px] shrink-0 flex-col bg-[#666]">
      <ExcelRibbon />
      <div className="h-[6px] bg-linear-to-b from-[#4c4c4c] to-[#666]" />
      <div className="mt-[4px] flex h-[26px] pr-[6px]">
        <div className="flex w-[98px] items-center justify-between border border-[#3f3f3f] bg-[#acacac] pr-[6px] pl-[4px] text-[13px] text-[#333]">
          B17
          <Caret />
        </div>
        <div className="flex w-[31px] flex-col items-center justify-center gap-[3px]">
          <span className="h-[2px] w-[2px] bg-[#eee]" />
          <span className="h-[2px] w-[2px] bg-[#eee]" />
          <span className="h-[2px] w-[2px] bg-[#eee]" />
        </div>
        <div className="flex w-[109px] items-center border border-[#3f3f3f] bg-[#acacac]">
          <svg width="12" height="12" viewBox="0 0 12 12" className="ml-[13px]">
            <path d="M1 1L11 11M11 1L1 11" stroke="#8a8a8a" strokeWidth="1.6" />
          </svg>
          <svg width="14" height="12" viewBox="0 0 14 12" className="ml-[23px]">
            <path d="M1 7L5 11L13 1" stroke="#8a8a8a" strokeWidth="1.8" fill="none" />
          </svg>
          <span className="ml-[22px] font-['Liberation_Serif',serif] text-[13px] font-bold text-[#333] italic">fx</span>
        </div>
        <div className="ml-[4px] flex flex-1 items-center justify-end border border-[#3f3f3f] bg-[#acacac] pr-[3px]">
          <svg width="10" height="6" viewBox="0 0 10 6">
            <path d="M1 1L5 5L9 1" stroke="#333" strokeWidth="1.6" fill="none" />
          </svg>
        </div>
      </div>
      <div className="mt-[10px] overflow-hidden">
        <Sheet />
      </div>
    </div>
  );
}

function WordPane() {
  return (
    <div className="flex min-w-0 flex-1 flex-col bg-[#666]">
      <WordRibbon />
      <div className="h-[6px] bg-linear-to-b from-[#4c4c4c] to-[#666]" />
      <div className="mt-[11px] ml-[61px] h-[448px] border-t border-l border-[#a8a8a8] bg-white pt-[96px] pl-[96px]">
        <BarChart selected />
      </div>
    </div>
  );
}

export default function App() {
  return (
    <div className="flex h-[585px] w-[1696px] overflow-hidden bg-[#666] font-['Roboto','Noto_Sans',sans-serif]">
      <ExcelPane />
      <div className="w-[2px] shrink-0 bg-[#454545]" />
      <WordPane />
    </div>
  );
}
